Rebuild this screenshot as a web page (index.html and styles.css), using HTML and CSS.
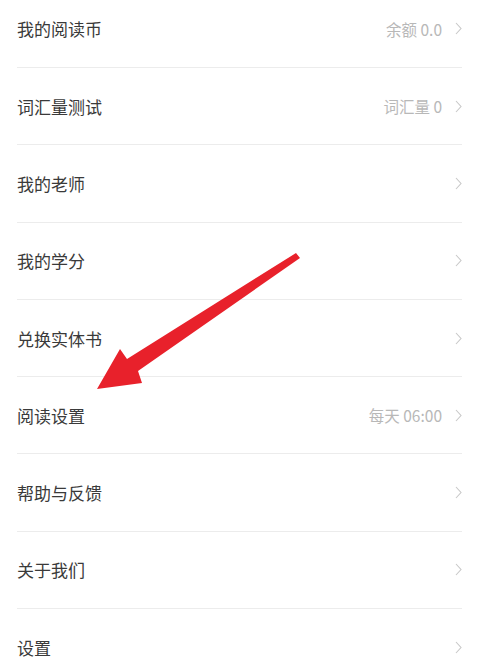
FILE: index.html
```html
<!DOCTYPE html>
<html lang="zh-CN">
<head>
<meta charset="utf-8">
<link rel="stylesheet" href="styles.css">
</head>
<body>
<div class="page">
  <ul class="list">
    <li class="item"><span class="label">我的阅读币</span><span class="value">余额 0.0</span><svg class="chev" viewBox="0 0 7 13"><polyline points="1,1 6,6.5 1,12"/></svg></li>
    <li class="item"><span class="label">词汇量测试</span><span class="value">词汇量 0</span><svg class="chev" viewBox="0 0 7 13"><polyline points="1,1 6,6.5 1,12"/></svg></li>
    <li class="item"><span class="label">我的老师</span><svg class="chev" viewBox="0 0 7 13"><polyline points="1,1 6,6.5 1,12"/></svg></li>
    <li class="item"><span class="label">我的学分</span><svg class="chev" viewBox="0 0 7 13"><polyline points="1,1 6,6.5 1,12"/></svg></li>
    <li class="item"><span class="label">兑换实体书</span><svg class="chev" viewBox="0 0 7 13"><polyline points="1,1 6,6.5 1,12"/></svg></li>
    <li class="item"><span class="label">阅读设置</span><span class="value">每天 06:00</span><svg class="chev" viewBox="0 0 7 13"><polyline points="1,1 6,6.5 1,12"/></svg></li>
    <li class="item"><span class="label">帮助与反馈</span><svg class="chev" viewBox="0 0 7 13"><polyline points="1,1 6,6.5 1,12"/></svg></li>
    <li class="item"><span class="label">关于我们</span><svg class="chev" viewBox="0 0 7 13"><polyline points="1,1 6,6.5 1,12"/></svg></li>
    <li class="item"><span class="label">设置</span><svg class="chev" viewBox="0 0 7 13"><polyline points="1,1 6,6.5 1,12"/></svg></li>
  </ul>
  <svg class="arrow" viewBox="0 0 480 670" width="480" height="670">
    <polygon points="296,253 300,258 138,371 142,383 97,389 120,349 127,359"/>
  </svg>
</div>
</body>
</html>
```
FILE: styles.css
```css
html, body {
  margin: 0;
  padding: 0;
  background: #ffffff;
}
body {
  font-family: "Noto Sans CJK SC", "Noto Sans", sans-serif;
  overflow: hidden;
}
.page {
  position: relative;
  width: 480px;
  height: 670px;
  overflow: hidden;
}
.list {
  list-style: none;
  margin: -9.3px 0 0 0;
  padding: 0;
}
.item {
  box-sizing: border-box;
  height: 77.3px;
  margin: 0 18px 0 17px;
  display: flex;
  align-items: center;
  border-bottom: 1px solid #ececec;
}
.label {
  flex: 1;
  font-size: 17px;
  color: #3a3a3a;
}
.value {
  font-size: 15.5px;
  color: #b8b8b8;
  margin-right: 13px;
}
.chev {
  width: 7px;
  height: 13px;
  fill: none;
  stroke: #c8c8c8;
  stroke-width: 1.1;
}
.arrow {
  position: absolute;
  left: 0;
  top: 0;
  fill: #e8212b;
}
```
